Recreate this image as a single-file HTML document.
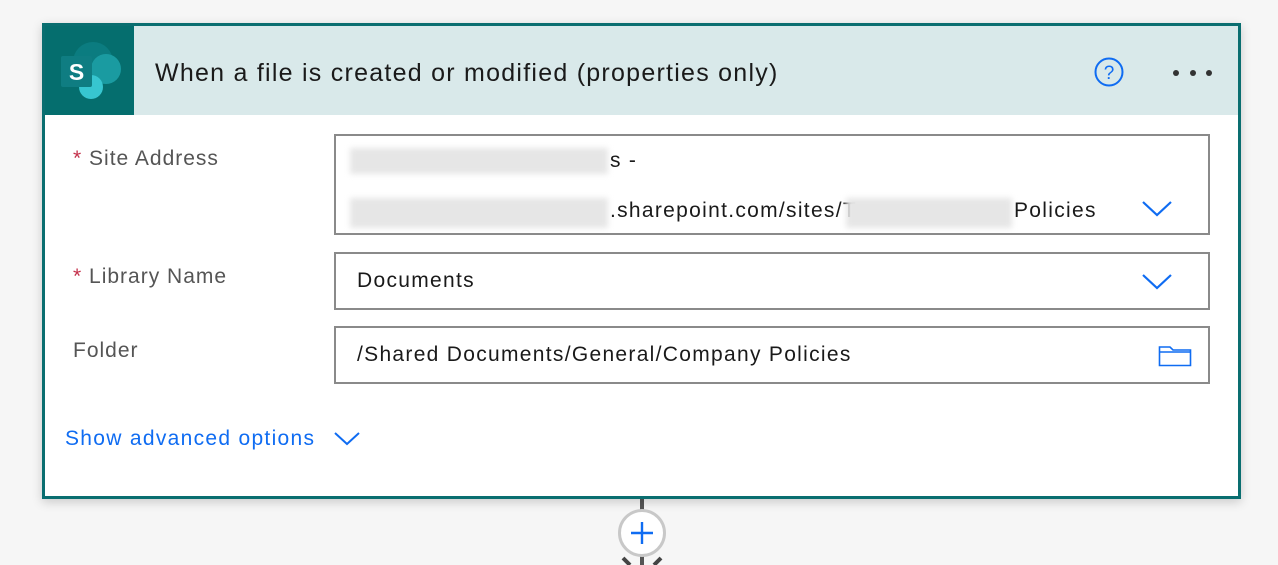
<!DOCTYPE html>
<html><head><meta charset="utf-8"><style>
body{margin:0;width:1278px;height:565px;background:#f6f6f6;font-family:"Liberation Sans","Segoe UI",sans-serif;position:relative;overflow:hidden}
.card{position:absolute;left:42px;top:23px;width:1193px;height:470px;border:3px solid #0a6e70;background:#fff;box-shadow:0 3px 10px rgba(0,0,0,.18)}
.hdr{position:absolute;left:0;top:0;width:1193px;height:89px;background:#d9e9ea}
.ico{position:absolute;left:0;top:0;width:89px;height:89px;background:#056e6e}
.title{position:absolute;left:110px;top:33px;font-size:25px;color:#1a1a1a;letter-spacing:1.25px}
.lbl{position:absolute;font-size:21px;color:#555;letter-spacing:1px}
.lbl b{color:#c4314b;font-weight:normal}
.box{position:absolute;left:289px;width:872px;border:2px solid #8a8a8a;background:#fff}
.txt{position:absolute;font-size:21px;color:#1a1a1a;letter-spacing:1.3px}
.blur{position:absolute;background:#e6e6e6;filter:blur(3px)}
</style></head><body>
<div style="position:absolute;left:640px;top:493px;width:4px;height:72px;background:#555"></div>
<div class="card">
<div class="hdr">
<div class="ico"><svg width="89" height="89">
<circle cx="48" cy="36" r="20" fill="#0b7c80"/>
<circle cx="61" cy="43" r="15" fill="#1a9ba1"/>
<circle cx="46" cy="61" r="12" fill="#37c6d0"/>
<rect x="16" y="30" width="31" height="31" rx="2" fill="#0f7d82"/>
<text x="31.5" y="54" text-anchor="middle" font-size="23" font-weight="bold" fill="#fff" font-family="Liberation Sans">S</text>
</svg></div>
<div class="title">When a file is created or modified (properties only)</div>
<svg style="position:absolute;left:1049px;top:31px" width="30" height="30"><circle cx="15" cy="15" r="13.5" fill="none" stroke="#0f6cf2" stroke-width="2"/><text x="15" y="22" text-anchor="middle" font-size="19" fill="#0f6cf2" font-family="Liberation Sans">?</text></svg>
<div style="position:absolute;left:1128px;top:44px;width:6px;height:6px;border-radius:50%;background:#333;box-shadow:17px 0 #333,33px 0 #333"></div>
</div>
<div class="lbl" style="left:28px;top:121px"><b>*</b> Site Address</div>
<div class="lbl" style="left:28px;top:239px"><b>*</b> Library Name</div>
<div class="lbl" style="left:28px;top:313px">Folder</div>
<div class="box" style="top:108px;height:97px">
<div class="blur" style="left:14px;top:12px;width:258px;height:26px"></div>
<div class="txt" style="left:274px;top:13px">s -</div>
<div class="blur" style="left:14px;top:62px;width:258px;height:30px"></div>
<div class="txt" style="left:274px;top:63px">.sharepoint.com/sites/T</div>
<div class="blur" style="left:510px;top:62px;width:166px;height:30px"></div>
<div class="txt" style="left:678px;top:63px">Policies</div>
<svg style="position:absolute;left:805px;top:64px" width="32" height="18"><path d="M2 2 L16 15 L30 2" fill="none" stroke="#0f6cf2" stroke-width="2.2"/></svg>
</div>
<div class="box" style="top:226px;height:54px">
<div class="txt" style="left:21px;top:15px">Documents</div>
<svg style="position:absolute;left:805px;top:19px" width="32" height="18"><path d="M2 2 L16 15 L30 2" fill="none" stroke="#0f6cf2" stroke-width="2.2"/></svg>
</div>
<div class="box" style="top:300px;height:54px">
<div class="txt" style="left:21px;top:15px">/Shared Documents/General/Company Policies</div>
<svg style="position:absolute;left:822px;top:15px" width="34" height="24"><path d="M1.5 4 H12 L15 7 H32.5 V22.5 H1.5 Z M1.5 9 H32.5" fill="none" stroke="#0f6cf2" stroke-width="1.6"/></svg>
</div>
<div style="position:absolute;left:20px;top:401px;font-size:21px;color:#0f6cf2;letter-spacing:1.3px">Show advanced options</div>
<svg style="position:absolute;left:288px;top:405px" width="28" height="16"><path d="M2 2 L14 13 L26 2" fill="none" stroke="#0f6cf2" stroke-width="2"/></svg>
</div>
<div style="position:absolute;left:618px;top:509px;width:42px;height:42px;border:3px solid #c8c8c8;border-radius:50%;background:#fff"></div>
<svg style="position:absolute;left:627px;top:518px" width="30" height="30"><path d="M15 4 V26 M4 15 H26" stroke="#0f6cf2" stroke-width="2.4"/></svg>
<svg style="position:absolute;left:620px;top:556px" width="44" height="9"><path d="M3 2 L10 9 M41 2 L34 9" stroke="#444" stroke-width="4"/></svg>
</body></html>
